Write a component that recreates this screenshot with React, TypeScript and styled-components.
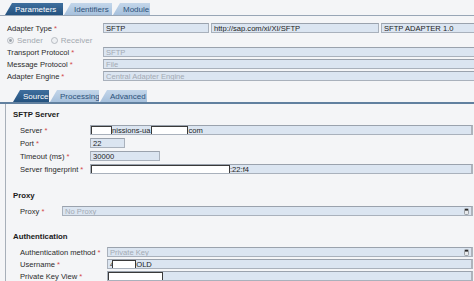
import React from "react";
import styled, { createGlobalStyle } from "styled-components";

const Global = createGlobalStyle`
  html, body { margin: 0; padding: 0; }
  body {
    background: #f4f5f7;
    font-family: "Liberation Sans", Arial, sans-serif;
    font-size: 7.6px;
    color: #2b2b2b;
    width: 474px;
    height: 281px;
    overflow: hidden;
  }
`;

const Page = styled.div`
  display: flex;
  flex-direction: column;
  width: 474px;
  height: 281px;
  overflow: hidden;
`;

const TabStrip = styled.div<{ $indent: number; $line: string; $lineW: number; $top: number }>`
  display: flex;
  align-items: flex-end;
  height: 15px;
  margin-top: ${(p) => p.$top}px;
  padding-left: ${(p) => p.$indent}px;
  border-bottom: ${(p) => p.$lineW}px solid ${(p) => p.$line};
  gap: 1px;
  flex-shrink: 0;
`;

const Tab = styled.div<{ $active?: boolean; $w: number }>`
  width: ${(p) => p.$w}px;
  height: 12px;
  box-sizing: border-box;
  padding-left: 10px;
  display: flex;
  align-items: center;
  font-size: 8px;
  color: ${(p) => (p.$active ? "#ffffff" : "#2d527a")};
  background: ${(p) =>
    p.$active
      ? "linear-gradient(#3f6f9e, #24527f)"
      : "linear-gradient(#c3d6ea, #a6c0dc)"};
  clip-path: polygon(7px 0, 100% 0, 100% 100%, 0 100%);
`;

const TopForm = styled.div`
  display: flex;
  flex-direction: column;
  padding: 6px 0 0 7px;
  flex-shrink: 0;
`;

const Row = styled.div`
  display: flex;
  align-items: center;
  height: 12px;
`;

const Label = styled.div<{ $w: number }>`
  width: ${(p) => p.$w}px;
  flex-shrink: 0;
  color: #2b2b2b;
  white-space: nowrap;
`;

const Req = styled.span`
  color: #d24a4a;
  margin-left: 2px;
`;

const Field = styled.div<{ $w?: number; $dim?: boolean; $end?: boolean; $last?: boolean }>`
  box-sizing: border-box;
  height: 10px;
  ${(p) => (p.$w ? `width: ${p.$w}px; flex-shrink: 0;` : "flex: 1;")}
  background: #dbe5f1;
  border: 1px solid #a9b1bc;
  border-top-color: #9aa2ad;
  ${(p) => (p.$end ? "border-right: 2px solid #aeb4bc;" : "")}
  display: flex;
  align-items: center;
  padding-left: 2px;
  color: ${(p) => (p.$dim ? "#a3aab3" : "#1e1e1e")};
  white-space: nowrap;
  overflow: hidden;
  margin-right: ${(p) => (p.$last ? -3 : p.$end ? 1 : 2)}px;
`;

const FieldText = styled.span`
  flex: 1;
  display: flex;
  align-items: center;
`;

const Redact = styled.span<{ $w: number; $ml?: number }>`
  display: inline-block;
  width: ${(p) => p.$w}px;
  height: 9px;
  box-sizing: border-box;
  background: #ffffff;
  border: 1px solid #3a3a3a;
  margin-left: ${(p) => p.$ml ?? -2}px;
`;

const Radios = styled.div`
  display: flex;
  align-items: center;
  gap: 3px;
  color: #a3a9b0;
  font-size: 8px;
`;

const RadioItem = styled.span`
  display: flex;
  align-items: center;
  gap: 3px;
  margin-right: 5px;
`;

const Panel = styled.div`
  flex: 1;
  margin-left: 5px;
  border-left: 1px solid #a7afb9;
  padding: 5px 0 0 7px;
  display: flex;
  flex-direction: column;
`;

const Section = styled.div<{ $top: number }>`
  display: flex;
  flex-direction: column;
  margin-top: ${(p) => p.$top}px;
`;

const SectionTitle = styled.div`
  font-weight: bold;
  font-size: 7.8px;
  height: 11px;
  line-height: 11px;
  color: #1a1a1a;
  margin-bottom: 4px;
`;

const SectionRows = styled.div<{ $gap: number }>`
  display: flex;
  flex-direction: column;
  gap: ${(p) => p.$gap}px;
  padding-left: 7px;
`;

const Select = styled.svg`
  flex-shrink: 0;
  margin-right: 2px;
`;

const Radio = ({ on }: { on?: boolean }) => (
  <svg width="7" height="7" viewBox="0 0 7 7">
    <circle cx="3.5" cy="3.5" r="3" fill="#eef0f3" stroke="#a9afb6" strokeWidth="0.8" />
    {on && <circle cx="3.5" cy="3.5" r="1.4" fill="#9aa0a8" />}
  </svg>
);

const Drop = () => (
  <Select width="5" height="7" viewBox="0 0 5 7">
    <rect x="0.5" y="0.5" width="4" height="6" rx="1" fill="#e8eaed" stroke="#8b9096" strokeWidth="0.8" />
    <rect x="1" y="1" width="3" height="1.6" fill="#2a2a2a" />
  </Select>
);

export default function App() {
  return (
    <Page>
      <Global />
      <TabStrip $indent={5} $line="#98a6b6" $lineW={1} $top={0}>
        <Tab $active $w={58}>Parameters</Tab>
        <Tab $w={48}>Identifiers</Tab>
        <Tab $w={37}>Module</Tab>
      </TabStrip>

      <TopForm>
        <Row>
          <Label $w={96}>
            Adapter Type<Req>*</Req>
          </Label>
          <Field $w={106}>SFTP</Field>
          <Field $w={168}>http://sap.com/xi/XI/SFTP</Field>
          <Field $last>SFTP ADAPTER 1.0</Field>
        </Row>
        <Row>
          <Radios>
            <RadioItem>
              <Radio on />
              Sender
            </RadioItem>
            <RadioItem>
              <Radio />
              Receiver
            </RadioItem>
          </Radios>
        </Row>
        <Row>
          <Label $w={96}>
            Transport Protocol<Req>*</Req>
          </Label>
          <Field $dim $last>SFTP</Field>
        </Row>
        <Row>
          <Label $w={96}>
            Message Protocol<Req>*</Req>
          </Label>
          <Field $dim $last>File</Field>
        </Row>
        <Row>
          <Label $w={96}>
            Adapter Engine<Req>*</Req>
          </Label>
          <Field $dim $last>Central Adapter Engine</Field>
        </Row>
      </TopForm>

      <TabStrip $indent={13} $line="#61809f" $lineW={2} $top={5}>
        <Tab $active $w={36}>Source</Tab>
        <Tab $w={49}>Processing</Tab>
        <Tab $w={47}>Advanced</Tab>
      </TabStrip>

      <Panel>
        <Section $top={0}>
          <SectionTitle>SFTP Server</SectionTitle>
          <SectionRows $gap={1}>
            <Row>
              <Label $w={70}>
                Server<Req>*</Req>
              </Label>
              <Field $end>
                <FieldText>
                  <Redact $w={21} />
                  nissions-ua
                  <Redact $w={37} $ml={1} />
                  com
                </FieldText>
              </Field>
            </Row>
            <Row>
              <Label $w={70}>
                Port<Req>*</Req>
              </Label>
              <Field $w={35}>22</Field>
            </Row>
            <Row>
              <Label $w={70}>
                Timeout (ms)<Req>*</Req>
              </Label>
              <Field $w={70}>30000</Field>
            </Row>
            <Row>
              <Label $w={70}>
                Server fingerprint<Req>*</Req>
              </Label>
              <Field $end>
                <FieldText>
                  <Redact $w={139} />
                  :22:f4
                </FieldText>
              </Field>
            </Row>
          </SectionRows>
        </Section>

        <Section $top={15}>
          <SectionTitle>Proxy</SectionTitle>
          <SectionRows $gap={0}>
            <Row>
              <Label $w={42}>
                Proxy<Req>*</Req>
              </Label>
              <Field $dim $end>
                <FieldText>No Proxy</FieldText>
                <Drop />
              </Field>
            </Row>
          </SectionRows>
        </Section>

        <Section $top={14}>
          <SectionTitle>Authentication</SectionTitle>
          <SectionRows $gap={0}>
            <Row>
              <Label $w={87}>
                Authentication method<Req>*</Req>
              </Label>
              <Field $dim $end>
                <FieldText>Private Key</FieldText>
                <Drop />
              </Field>
            </Row>
            <Row>
              <Label $w={87}>
                Username<Req>*</Req>
              </Label>
              <Field $end>
                <FieldText>
                  4<Redact $w={24} $ml={-2} />
                  OLD
                </FieldText>
              </Field>
            </Row>
            <Row>
              <Label $w={87}>
                Private Key View<Req>*</Req>
              </Label>
              <Field $end>
                <FieldText>
                  <Redact $w={55} />
                </FieldText>
              </Field>
            </Row>
          </SectionRows>
        </Section>
      </Panel>
    </Page>
  );
}
